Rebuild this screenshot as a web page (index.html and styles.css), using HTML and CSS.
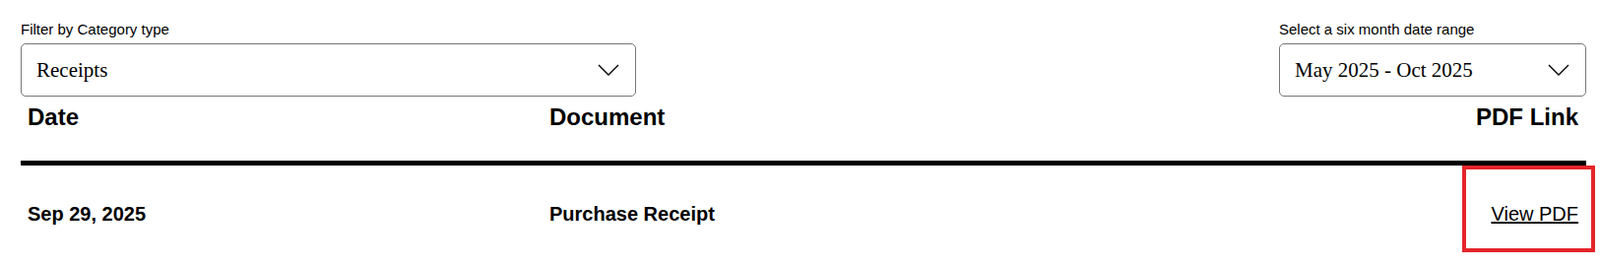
FILE: index.html
```html
<!DOCTYPE html>
<html lang="en">
<head>
    <meta charset="UTF-8">
    <meta name="viewport" content="width=device-width, initial-scale=1.0">
    <title>Documents</title>
    <link rel="stylesheet" href="styles.css">
</head>
<body>
    <div class="documents">
        <div class="filters">
            <div class="filter-group">
                <label class="filter-label">Filter by Category type</label>
                <div class="select select-category">
                    <span>Receipts</span>
                    <svg class="chevron" width="22" height="12" viewBox="0 0 22 12"><path d="M1 1 L11 11 L21 1" fill="none" stroke="#000" stroke-width="1.4"/></svg>
                </div>
            </div>
            <div class="filter-group">
                <label class="filter-label">Select a six month date range</label>
                <div class="select select-range">
                    <span>May 2025 - Oct 2025</span>
                    <svg class="chevron" width="22" height="12" viewBox="0 0 22 12"><path d="M1 1 L11 11 L21 1" fill="none" stroke="#000" stroke-width="1.4"/></svg>
                </div>
            </div>
        </div>

        <table class="doc-table">
            <thead>
                <tr>
                    <th>Date</th>
                    <th>Document</th>
                    <th class="col-link">PDF Link</th>
                </tr>
            </thead>
            <tbody>
                <tr>
                    <td>Sep 29, 2025</td>
                    <td>Purchase Receipt</td>
                    <td class="col-link"><a href="#" class="pdf-link">View PDF</a></td>
                </tr>
            </tbody>
        </table>
    </div>
</body>
</html>
```

FILE: styles.css
```css
* { margin: 0; padding: 0; box-sizing: border-box; }
body { font-family: "Liberation Sans", Arial, sans-serif; background: #fff; color: #000; }
.documents { width: 1590px; margin-left: 21px; padding-top: 21px; }
.filters { display: flex; justify-content: space-between; }
.filter-label { display: block; font-size: 15px; line-height: 17px; margin-bottom: 6px; }
.select { display: flex; align-items: center; justify-content: space-between; height: 54px; border: 1px solid #767676; border-radius: 5px; padding: 0 16px 0 15px; font-family: "Liberation Serif", "Times New Roman", serif; font-size: 21px; }
.select-category { width: 625px; }
.select-range { width: 312px; }
.chevron { display: block; }
.doc-table { width: 100%; border-collapse: collapse; table-layout: fixed; margin-top: 7px; }
.doc-table th { font-size: 24px; font-weight: bold; text-align: left; padding: 0 8px 30px 7px; border-bottom: 5px solid #000; }
.doc-table td { font-size: 20px; font-weight: bold; padding: 38px 8px 30px 7px; }
.doc-table .col-link { text-align: right; }
.pdf-link { position: relative; display: inline-block; color: #000; font-weight: normal; text-decoration: underline; }
.pdf-link::after { content: ""; position: absolute; left: -29px; right: -17px; top: -38px; bottom: -27px; border: 4px solid #e5252a; }
```
